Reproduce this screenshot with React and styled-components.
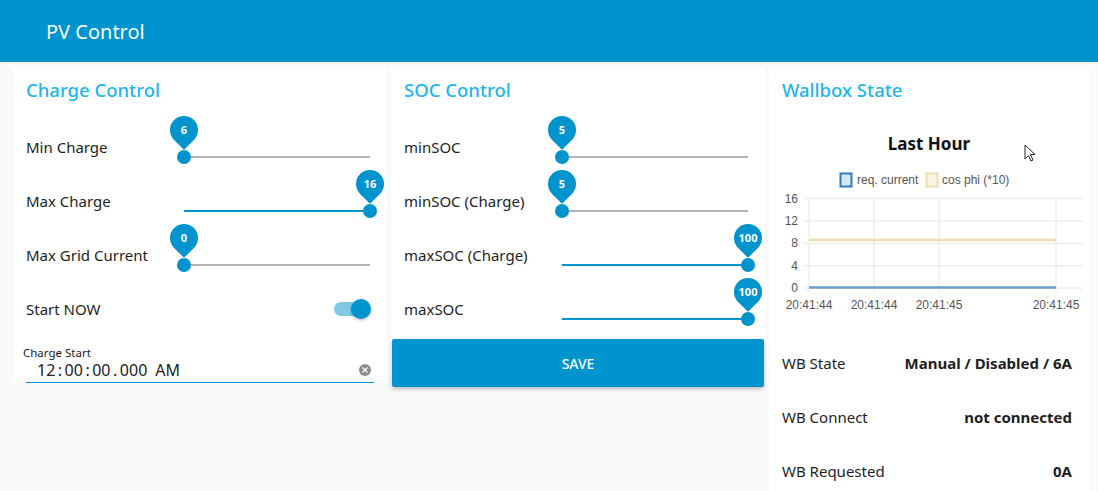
import React from "react";
import styled, { createGlobalStyle } from "styled-components";

const BLUE = "#0094ce";
const FONT = `"Noto Sans", "Open Sans", sans-serif`;

const GlobalStyle = createGlobalStyle`
  html, body {
    margin: 0;
    padding: 0;
    background: #fafafa;
    font-family: ${FONT};
    overflow: hidden;
  }
`;

const Page = styled.div`
  width: 1098px;
  height: 491px;
  overflow: hidden;
`;

const Header = styled.header`
  height: 62px;
  background: ${BLUE};
  display: flex;
  align-items: center;
  padding-left: 46px;
  color: #fff;
  font-size: 20px;
  box-sizing: border-box;
`;

const Main = styled.main`
  display: flex;
  align-items: flex-start;
  gap: 4px;
  padding: 6px 0 0 13px;
`;

const Card = styled.section`
  flex-shrink: 0;
  background: #fff;
  width: ${(p) => p.$w}px;
  min-height: ${(p) => p.$h || 0}px;
  display: flex;
  flex-direction: column;
`;

const Title = styled.h2`
  margin: 0;
  height: 52px;
  box-sizing: border-box;
  padding: 11px 13px 0;
  font-size: 18.5px;
  line-height: 22px;
  font-weight: 500;
  color: #1fb5ee;
`;

const Row = styled.div`
  height: 54px;
  display: grid;
  grid-template-columns: 158px 1fr;
  align-items: center;
  padding: 0 17px 0 13px;
  color: #1e1e1e;
  font-size: 15px;
`;

const InfoRow = styled(Row)`
  grid-template-columns: auto 1fr;
  b {
    text-align: right;
    font-weight: 700;
  }
`;

const SliderBox = styled.div`
  align-self: stretch;
  padding-top: 36px;
  box-sizing: border-box;
`;

const Track = styled.div`
  position: relative;
  height: 2px;
  background: #b4b4b4;
`;

const Fill = styled.div`
  height: 100%;
  background: ${BLUE};
`;

const Thumb = styled.div`
  position: absolute;
  top: 1px;
  width: 14px;
  height: 14px;
  margin: -7px 0 0 -7px;
  border-radius: 50%;
  background: ${BLUE};
`;

const Pin = styled.div`
  position: absolute;
  top: -26px;
  width: 28px;
  height: 28px;
  margin: -14px 0 0 -14px;
  &::before {
    content: "";
    position: absolute;
    inset: 0;
    background: ${BLUE};
    border-radius: 50% 50% 50% 0;
    transform: rotate(-45deg);
  }
  span {
    position: relative;
    display: block;
    line-height: 28px;
    text-align: center;
    color: #fff;
    font-size: 11px;
    font-weight: 700;
  }
`;

const Slider = ({ value, min, max }) => {
  const pct = ((value - min) / (max - min)) * 100;
  return (
    <SliderBox>
      <Track>
        <Fill style={{ width: `${pct}%` }} />
        <Thumb style={{ left: `${pct}%` }} />
        <Pin style={{ left: `${pct}%` }}>
          <span>{value}</span>
        </Pin>
      </Track>
    </SliderBox>
  );
};

const Switch = styled.div`
  justify-self: end;
  position: relative;
  width: 36px;
  height: 14px;
  border-radius: 7px;
  background: #80c9e6;
  &::after {
    content: "";
    position: absolute;
    right: -1px;
    top: -3px;
    width: 20px;
    height: 20px;
    border-radius: 50%;
    background: ${BLUE};
    box-shadow: 0 1px 3px rgba(0, 0, 0, 0.3);
  }
`;

const Field = styled.div`
  margin: 0 13px;
  display: flex;
  flex-direction: column;
  box-sizing: border-box;
  padding-top: 10px;
  border-bottom: 1px solid ${BLUE};
  height: 47px;
`;

const FieldLabel = styled.label`
  margin-left: -3px;
  font-size: 11.5px;
  line-height: 14px;
  color: #222;
`;

const FieldValue = styled.div`
  display: flex;
  align-items: center;
  justify-content: space-between;
  padding-left: 11px;
  font-size: 16px;
  line-height: 20px;
  color: #222;
`;

const TimeText = styled.span`
  display: flex;
`;

const Sep = styled.span`
  margin: 0 ${(p) => p.$gap || 2.5}px;
`;

const Clear = styled.span`
  width: 12px;
  height: 12px;
  border-radius: 50%;
  background: #8c8c8c;
  margin-right: 3px;
  display: flex;
  align-items: center;
  justify-content: center;
`;

const SaveButton = styled.button`
  margin: 3px 1px 0;
  height: 48px;
  border: none;
  border-radius: 2px;
  background: ${BLUE};
  color: #fff;
  font-family: ${FONT};
  font-size: 14px;
  font-weight: 500;
  box-shadow: 0 2px 4px rgba(0, 0, 0, 0.25);
`;

const Chart = styled.svg`
  display: block;
  width: 320px;
  height: 216px;
  text {
    font-family: "Liberation Sans", Arial, sans-serif;
    font-size: 12px;
    fill: #555;
  }
  .title {
    font-family: ${FONT};
    font-size: 17px;
    font-weight: 700;
    fill: #111;
  }
`;

const yTicks = [
  [16, 78.7],
  [12, 101],
  [8, 123.3],
  [4, 145.7],
  [0, 168],
];
const xTicks = [
  ["20:41:44", 40],
  ["20:41:44", 105],
  ["20:41:45", 170],
  ["20:41:45", 287],
];

const HistoryChart = () => (
  <Chart viewBox="0 0 320 216">
    <text className="title" x="160" y="30" textAnchor="middle">
      Last Hour
    </text>
    <rect x="71.5" y="53.5" width="11" height="13" fill="#d6e6f3" stroke="#2f7cbf" strokeWidth="2" />
    <text x="88" y="64">req. current</text>
    <rect x="157.5" y="53.5" width="11" height="13" fill="#fbf5e8" stroke="#eedcb1" strokeWidth="2" />
    <text x="173" y="64">cos phi (*10)</text>
    {yTicks.map(([v, y]) => (
      <g key={v}>
        <line x1="35" x2="314" y1={y} y2={y} stroke="#e6e6e6" />
        <text x="29" y={y + 4} textAnchor="end">
          {v}
        </text>
      </g>
    ))}
    {xTicks.map(([t, x], i) => (
      <g key={i}>
        <line x1={x} x2={x} y1="78" y2="173" stroke="#e6e6e6" />
        <text x={x} y="189" textAnchor="middle">
          {t}
        </text>
      </g>
    ))}
    <line x1="40" x2="287" y1="120" y2="120" stroke="#f0ddb0" strokeWidth="2.5" />
    <line x1="40" x2="287" y1="167.5" y2="167.5" stroke="#6a9fd0" strokeWidth="2.5" />
    <path
      d="M256 25 L256 39 L259.5 35.5 L262 41 L264 40 L261.5 34.5 L266 34.5 Z"
      fill="#fff"
      stroke="#222"
      strokeWidth="1"
      strokeLinejoin="round"
    />
  </Chart>
);

const App = () => (
  <Page>
    <GlobalStyle />
    <Header>PV Control</Header>
    <Main>
      <Card $w={374}>
        <Title>Charge Control</Title>
        <Row>
          Min Charge
          <Slider value={6} min={6} max={16} />
        </Row>
        <Row>
          Max Charge
          <Slider value={16} min={6} max={16} />
        </Row>
        <Row>
          Max Grid Current
          <Slider value={0} min={0} max={16} />
        </Row>
        <Row>
          Start NOW
          <Switch />
        </Row>
        <Field>
          <FieldLabel>Charge Start</FieldLabel>
          <FieldValue>
            <TimeText>
              12<Sep>:</Sep>00<Sep>:</Sep>00<Sep>.</Sep>000<Sep $gap={4} />AM
            </TimeText>
            <Clear>
              <svg width="6" height="6" viewBox="0 0 6 6">
                <path d="M0.5 0.5 L5.5 5.5 M5.5 0.5 L0.5 5.5" stroke="#fff" strokeWidth="1.4" />
              </svg>
            </Clear>
          </FieldValue>
        </Field>
      </Card>
      <Card $w={374}>
        <Title>SOC Control</Title>
        <Row>
          minSOC
          <Slider value={5} min={5} max={100} />
        </Row>
        <Row>
          minSOC (Charge)
          <Slider value={5} min={5} max={100} />
        </Row>
        <Row>
          maxSOC (Charge)
          <Slider value={100} min={5} max={100} />
        </Row>
        <Row>
          maxSOC
          <Slider value={100} min={5} max={100} />
        </Row>
        <SaveButton>SAVE</SaveButton>
      </Card>
      <Card $w={320} $h={440}>
        <Title>Wallbox State</Title>
        <HistoryChart />
        <InfoRow>
          WB State
          <b>Manual / Disabled / 6A</b>
        </InfoRow>
        <InfoRow>
          WB Connect
          <b>not connected</b>
        </InfoRow>
        <InfoRow>
          WB Requested
          <b>0A</b>
        </InfoRow>
      </Card>
    </Main>
  </Page>
);

export default App;
